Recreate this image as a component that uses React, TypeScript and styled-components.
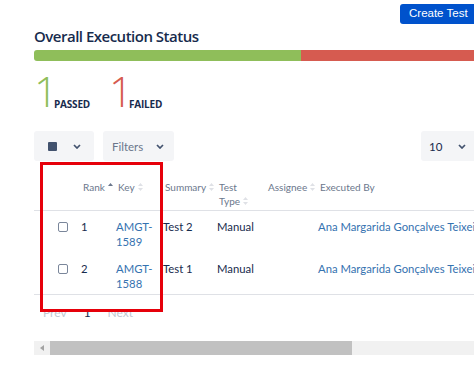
import styled, { createGlobalStyle } from "styled-components";

const GlobalStyle = createGlobalStyle`
  body {
    margin: 0;
    background: #ffffff;
    font-family: Lato, "Open Sans", sans-serif;
    color: #172b4d;
    overflow: hidden;
  }
`;

const SPage = styled.div`
  position: relative;
  width: 474px;
  height: 366px;
  padding-left: 34px;
  box-sizing: border-box;
  overflow: hidden;
`;

const STopBar = styled.div`
  display: flex;
  justify-content: flex-end;
  margin-right: -8px;
  padding-top: 4px;
`;

const SCreateButton = styled.button`
  width: 82px;
  height: 20px;
  border: none;
  border-radius: 3px;
  background: #0052cc;
  color: #ffffff;
  font-family: "Liberation Sans", Arial, sans-serif;
  font-size: 11.5px;
  padding: 0 0 2px 9px;
  text-align: left;
`;

const STitle = styled.h2`
  margin: 2px 0 0;
  font-family: "Open Sans", sans-serif;
  font-size: 15px;
  line-height: 20px;
  font-weight: 600;
  letter-spacing: -0.5px;
  color: #172b4d;
`;

const SBar = styled.div`
  display: flex;
  height: 11px;
  margin-top: 4px;
  border-radius: 3px 0 0 3px;
  overflow: hidden;
`;

const SBarPart = styled.div<{ $color: string }>`
  background: ${(p) => p.$color};
`;

const SStats = styled.div`
  display: flex;
  align-items: flex-end;
  gap: 19px;
  margin-top: 8px;
  height: 42px;
`;

const SStat = styled.div`
  display: flex;
  align-items: flex-end;
`;

const SBigNumber = styled.span<{ $color: string }>`
  font-family: "Open Sans", sans-serif;
  font-size: 42px;
  line-height: 40px;
  font-weight: 300;
  letter-spacing: -4px;
  color: ${(p) => p.$color};
`;

const SStatLabel = styled.span`
  font-family: "Open Sans", sans-serif;
  font-size: 10px;
  font-weight: 700;
  letter-spacing: -0.2px;
  color: #172b4d;
  line-height: 10px;
  margin-bottom: 2px;
`;

const SToolbar = styled.div`
  display: flex;
  align-items: center;
  gap: 9px;
  margin-top: 20px;
  height: 30px;
`;

const SToolButton = styled.div<{ $width: number }>`
  display: flex;
  align-items: center;
  gap: 13px;
  width: ${(p) => p.$width}px;
  height: 30px;
  padding-left: 9px;
  box-sizing: border-box;
  background: #f4f5f7;
  border-radius: 3px;
  font-size: 11.5px;
  color: #6b778c;
`;

const SSelectButton = styled(SToolButton)`
  padding-left: 14px;
  gap: 16px;
`;

const SSquare = styled.span`
  width: 9px;
  height: 9px;
  background: #42526e;
  border-radius: 1px;
`;

const SSpacer = styled.div`
  flex: 1;
`;

const SPageSize = styled(SToolButton)`
  margin-right: -8px;
  padding-left: 8px;
  gap: 16px;
  color: #172b4d;
`;

const STableWrap = styled.div`
  width: 560px;
  margin-top: 11px;
`;

const STable = styled.table`
  table-layout: fixed;
  border-collapse: collapse;
  width: 560px;
`;

const SHeadCell = styled.th`
  padding: 8px 0 2px 5px;
  font-size: 10px;
  line-height: 14px;
  font-weight: 400;
  color: #6b778c;
  text-align: left;
  vertical-align: top;
  border-bottom: 1px solid #dfe1e6;
  white-space: nowrap;
`;

const SRow = styled.tr`
  &:last-child td {
    border-bottom: 1px solid #dfe1e6;
    padding-bottom: 3px;
  }
`;

const SCell = styled.td<{ $link?: boolean }>`
  padding: 8px 5px 4px 3px;
  font-size: 11.3px;
  line-height: 15px;
  vertical-align: top;
  color: ${(p) => (p.$link ? "#3572b0" : "#172b4d")};
  white-space: nowrap;
`;

const SKeyCell = styled(SCell)`
  white-space: normal;
`;

const SCheckCell = styled.td`
  padding: 11px 0 0 24px;
  vertical-align: top;
`;

const SCheckbox = styled.span`
  display: block;
  width: 8px;
  height: 8px;
  border: 1px solid #7a869a;
  border-radius: 2px;
`;

const SPager = styled.div`
  display: flex;
  gap: 17px;
  margin-top: 11px;
  padding-left: 9px;
  font-size: 12px;
  line-height: 14px;
  color: #c1c7d0;
`;

const SPagerCurrent = styled.span`
  color: #172b4d;
`;

const SScrollbar = styled.div`
  display: flex;
  align-items: center;
  height: 14px;
  margin-top: 21px;
  margin-right: -8px;
  background: #f1f1f1;
`;

const SArrow = styled.span`
  width: 16px;
  display: flex;
  justify-content: center;
`;

const SThumb = styled.div`
  width: 302px;
  height: 14px;
  background: #c1c1c1;
`;

const SHighlight = styled.div`
  position: absolute;
  left: 40px;
  top: 162px;
  width: 123px;
  height: 150px;
  box-sizing: border-box;
  border: 3px solid #e6000a;
`;

const Chevron = ({ color = "#42526e" }: { color?: string }) => (
  <svg width="8" height="5" viewBox="0 0 8 5">
    <path d="M1 1l3 3L7 1" fill="none" stroke={color} strokeWidth="1.7" />
  </svg>
);

const SortIcon = ({ up }: { up?: boolean }) => (
  <svg width="5" height="8" viewBox="0 0 5 8" style={{ marginLeft: 3 }}>
    <path d="M0 3L2.5 0L5 3Z" fill={up ? "#6b778c" : "#dfe1e6"} />
    {!up && <path d="M0 5L2.5 8L5 5Z" fill="#dfe1e6" />}
  </svg>
);

const rows = [
  { rank: "1", key: "AMGT-1589", summary: "Test 2" },
  { rank: "2", key: "AMGT-1588", summary: "Test 1" },
];

const App = () => {
  return (
    <SPage>
      <GlobalStyle />
      <STopBar>
        <SCreateButton>Create Test</SCreateButton>
      </STopBar>
      <STitle>Overall Execution Status</STitle>
      <SBar>
        <SBarPart $color="#8fbe5a" style={{ width: 267 }} />
        <SBarPart $color="#d65b50" style={{ flex: 1 }} />
      </SBar>
      <SStats>
        <SStat>
          <SBigNumber $color="#8fbe5a">1</SBigNumber>
          <SStatLabel>PASSED</SStatLabel>
        </SStat>
        <SStat>
          <SBigNumber $color="#d65b50">1</SBigNumber>
          <SStatLabel>FAILED</SStatLabel>
        </SStat>
      </SStats>
      <SToolbar>
        <SSelectButton $width={60}>
          <SSquare />
          <Chevron />
        </SSelectButton>
        <SToolButton $width={71}>
          Filters
          <Chevron />
        </SToolButton>
        <SSpacer />
        <SPageSize $width={61}>
          10
          <Chevron />
        </SPageSize>
      </SToolbar>
      <STableWrap>
        <STable>
          <colgroup>
            <col style={{ width: 44 }} />
            <col style={{ width: 35 }} />
            <col style={{ width: 47 }} />
            <col style={{ width: 54 }} />
            <col style={{ width: 49 }} />
            <col style={{ width: 52 }} />
            <col style={{ width: 279 }} />
          </colgroup>
          <thead>
            <tr>
              <SHeadCell />
              <SHeadCell>
                Rank
                <SortIcon up />
              </SHeadCell>
              <SHeadCell>
                Key
                <SortIcon />
              </SHeadCell>
              <SHeadCell>
                Summary
                <SortIcon />
              </SHeadCell>
              <SHeadCell>
                Test
                <br />
                Type
                <SortIcon />
              </SHeadCell>
              <SHeadCell>
                Assignee
                <SortIcon />
              </SHeadCell>
              <SHeadCell>Executed By</SHeadCell>
            </tr>
          </thead>
          <tbody>
            {rows.map((r) => (
              <SRow key={r.key}>
                <SCheckCell>
                  <SCheckbox />
                </SCheckCell>
                <SCell>{r.rank}</SCell>
                <SKeyCell $link>{r.key.replace("-", "-\u200b")}</SKeyCell>
                <SCell>{r.summary}</SCell>
                <SCell>Manual</SCell>
                <SCell />
                <SCell $link>Ana Margarida Gonçalves Teixeira</SCell>
              </SRow>
            ))}
          </tbody>
        </STable>
      </STableWrap>
      <SPager>
        <span>Prev</span>
        <SPagerCurrent>1</SPagerCurrent>
        <span>Next</span>
      </SPager>
      <SScrollbar>
        <SArrow>
          <svg width="4" height="6" viewBox="0 0 4 6">
            <path d="M4 0L0 3L4 6Z" fill="#a3a3a3" />
          </svg>
        </SArrow>
        <SThumb />
      </SScrollbar>
      <SHighlight />
    </SPage>
  );
};

export default App;
